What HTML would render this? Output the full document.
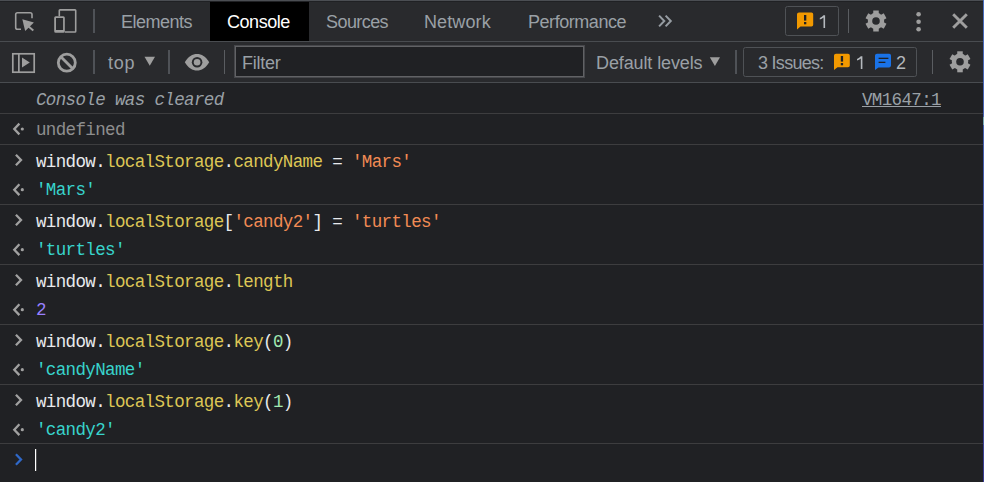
<!DOCTYPE html>
<html><head><meta charset="utf-8">
<style>
html,body{margin:0;padding:0;background:#202124;}
#root{position:relative;width:984px;height:482px;overflow:hidden;background:#202124;font-family:"Liberation Sans",sans-serif;}
.a{position:absolute;white-space:pre;}
.s{font-family:"Liberation Sans",sans-serif;font-size:18px;line-height:19px;color:#9aa0a6;}
.m{font-family:"Liberation Mono",monospace;font-size:17.5px;letter-spacing:-0.63px;line-height:19px;color:#e8eaed;}
.hl{position:absolute;left:0;width:983px;height:1px;background:#3d3d3f;}
.sep{position:absolute;width:1px;background:#5a5d61;}
.sep2{width:2px;background:#4f5257;}
svg{position:absolute;overflow:visible;}
.p{color:#ddc655}
.str{color:#f28b54}
.res{color:#38d4cc}
.num{color:#9980ff}
.gr{color:#a1e9b1}
</style></head><body>
<div id="root">
  <!-- top toolbar -->
  <div class="a" style="left:0;top:0;width:984px;height:1px;background:#4b4e53"></div>
  <div class="a" style="left:0;top:1px;width:984px;height:1px;background:#202124"></div>
  <div class="a" style="left:0;top:2px;width:984px;height:39px;background:#292a2d"></div>
  <div class="a" style="left:0;top:41px;width:984px;height:1px;background:#494c50"></div>
  <div class="a" style="left:0;top:42px;width:984px;height:40px;background:#292a2d"></div>
  <div class="a" style="left:0;top:82px;width:984px;height:1px;background:#494c50"></div>

  <!-- inspect icon -->
  <svg style="left:0;top:0" width="984" height="42">
    <path d="M21 29.2 H17.5 Q15.7 29.2 15.7 27.4 V14.5 Q15.7 12.7 17.5 12.7 H30.2 Q32 12.7 32 14.5 V18.2" fill="none" stroke="#9e9e9e" stroke-width="1.6"/>
    <path d="M22.3 19.3 L33.9 22.6 L25.2 31 Z" fill="#9e9e9e"/>
    <path d="M28 26 L33.3 30.6" stroke="#9e9e9e" stroke-width="2"/>
    <!-- device icon -->
    <path fill-rule="evenodd" fill="#9e9e9e" d="M58.5 16.3 V10.6 Q58.5 9.1 60 9.1 H75 Q76.5 9.1 76.5 10.6 V31.3 Q76.5 32.8 75 32.8 H64.8 V31.2 H74.9 V10.7 H60.1 V16.3 Z"/>
    <path fill-rule="evenodd" fill="#9e9e9e" d="M54.2 17.8 Q54.2 16.3 55.7 16.3 H63.3 Q64.8 16.3 64.8 17.8 V31.3 Q64.8 32.8 63.3 32.8 H55.7 Q54.2 32.8 54.2 31.3 Z M56 18.1 H63.1 V30 H56 Z"/>
  </svg>
  <div class="sep sep2" style="left:93px;top:9px;height:24px"></div>

  <div class="a" style="left:210px;top:2px;width:99px;height:39px;background:#000"></div>
  <div class="a s" style="left:121px;top:13px;letter-spacing:-0.5px">Elements</div>
  <div class="a s" style="left:227px;top:13px;letter-spacing:-0.45px;color:#ffffff">Console</div>
  <div class="a s" style="left:326px;top:13px;letter-spacing:-0.57px">Sources</div>
  <div class="a s" style="left:424px;top:13px;letter-spacing:0.12px">Network</div>
  <div class="a s" style="left:528px;top:13px;letter-spacing:-0.45px">Performance</div>
  <svg style="left:0;top:0" width="984" height="42">
    <path d="M659.1 15.6 L664.3 21 L659.1 26.4 M665.6 15.6 L670.8 21 L665.6 26.4" fill="none" stroke="#969ca2" stroke-width="2"/>
  </svg>

  <!-- issues badge top -->
  <div class="a" style="left:785px;top:6px;width:52px;height:28px;border:1px solid #4f5256;border-radius:2.5px"></div>
  <svg style="left:0;top:0" width="984" height="42">
    <path d="M799 12.6 H811.5 Q813.2 12.6 813.2 14.3 V24.7 Q813.2 26.4 811.5 26.4 H800.5 L797 29.4 V14.3 Q797 12.6 799 12.6 Z" fill="#f29900"/>
    <rect x="804" y="15" width="2.3" height="5.6" fill="#202124"/>
    <rect x="804" y="22" width="2.3" height="2.3" fill="#202124"/>
  </svg>
  <svg style="left:0;top:0" width="984" height="42"><path d="M823.5 15.2 H825.1 V28 H823.5 V17.6 Q822 18.9 819.8 19.6 V17.9 Q822.2 17 823.5 15.2 Z" fill="#b5b9be"/></svg>
  <div class="sep" style="left:848px;top:9px;height:24px"></div>

  <!-- gear, kebab, close -->
  <svg style="left:0;top:0" width="984" height="42">
    <g transform="translate(876,21)" fill="#9e9e9e">
      <circle r="8.2"/>
      <rect x="-2.75" y="-10.5" width="5.5" height="21"/>
      <rect x="-2.75" y="-10.5" width="5.5" height="21" transform="rotate(60)"/>
      <rect x="-2.75" y="-10.5" width="5.5" height="21" transform="rotate(120)"/>
      <circle r="3.8" fill="#292a2d"/>
    </g>
    <circle cx="918.6" cy="14.2" r="2.3" fill="#9e9e9e"/>
    <circle cx="918.6" cy="21.7" r="2.3" fill="#9e9e9e"/>
    <circle cx="918.6" cy="29.2" r="2.3" fill="#9e9e9e"/>
    <path d="M953.2 14.2 L966.8 27.8 M966.8 14.2 L953.2 27.8" stroke="#9e9e9e" stroke-width="2.9"/>
  </svg>

  <!-- second toolbar -->
  <svg style="left:0;top:0" width="984" height="84">
    <rect x="12.8" y="53.8" width="21.4" height="18.4" fill="none" stroke="#9e9e9e" stroke-width="1.7"/>
    <rect x="18" y="53.8" width="1.7" height="18.4" fill="#9e9e9e"/>
    <path d="M22 57.6 L29.8 62.5 L22 67.4 Z" fill="#9e9e9e"/>
    <circle cx="66.8" cy="62.7" r="8.5" fill="none" stroke="#9e9e9e" stroke-width="2.8"/>
    <path d="M60.8 56.7 L72.8 68.7" stroke="#9e9e9e" stroke-width="2.8"/>
    <path d="M144.5 56.7 H155 L149.75 65.8 Z" fill="#9e9e9e"/>
    <path d="M184.8 62.3 C188.3 56.6 192.5 54.1 197 54.1 C201.5 54.1 205.7 56.6 209.2 62.3 C205.7 68 201.5 70.6 197 70.6 C192.5 70.6 188.3 68 184.8 62.3 Z" fill="#9e9e9e"/>
    <circle cx="197.1" cy="62.3" r="5.3" fill="#292a2d"/>
    <circle cx="197.1" cy="62.3" r="3.3" fill="#9e9e9e"/>
    <path d="M709.8 57.3 H720 L714.9 66 Z" fill="#9e9e9e"/>
  </svg>
  <div class="sep sep2" style="left:93px;top:50px;height:24px"></div>
  <div class="a s" style="left:108px;top:54px;letter-spacing:0.8px">top</div>
  <div class="sep sep2" style="left:168px;top:50px;height:24px"></div>
  <div class="sep" style="left:224px;top:50px;height:24px"></div>

  <div class="a" style="left:234px;top:45px;width:349px;height:31px;border:1px solid #46474b;background:#202124;box-shadow:inset 0 0 0 1px #616265"></div>
  <div class="a s" style="left:242px;top:54px;letter-spacing:-0.25px">Filter</div>
  <div class="a s" style="left:596px;top:54px;letter-spacing:-0.11px">Default levels</div>
  <div class="sep sep2" style="left:735px;top:50px;height:24px"></div>

  <div class="a" style="left:743px;top:47px;width:172px;height:28px;border:1px solid #4f5256;border-radius:2.5px"></div>
  <div class="a s" style="left:758px;top:54px;letter-spacing:-0.72px">3 Issues:</div>
  <svg style="left:0;top:0" width="984" height="84">
    <path d="M836 53.7 H848 Q849.8 53.7 849.8 55.5 V65.4 Q849.8 67.2 848 67.2 H837.5 L834 70 V55.5 Q834 53.7 836 53.7 Z" fill="#f29900"/>
    <rect x="840.8" y="56" width="2.3" height="5.6" fill="#202124"/>
    <rect x="840.8" y="63" width="2.3" height="2.3" fill="#202124"/>
    <path d="M877 53.7 H889.2 Q891 53.7 891 55.5 V65.6 Q891 67.4 889.2 67.4 H878.5 L875 70 V55.5 Q875 53.7 877 53.7 Z" fill="#1a73e8"/>
    <rect x="878.6" y="57.7" width="9.8" height="1.3" fill="#202124"/>
    <rect x="878.6" y="61.7" width="6.8" height="1.3" fill="#202124"/>
  </svg>
  <svg style="left:0;top:0" width="984" height="84"><path d="M860.8 56.2 H862.4 V69 H860.8 V58.6 Q859.2 59.9 857 60.6 V58.9 Q859.4 58 860.8 56.2 Z" fill="#b5b9be"/></svg>
  <div class="a s" style="left:896px;top:54px;color:#b3b7bb">2</div>
  <div class="sep" style="left:932px;top:50px;height:24px"></div>
  <svg style="left:0;top:0" width="984" height="84">
    <g transform="translate(960,61.8)" fill="#9e9e9e">
      <circle r="8.2"/>
      <rect x="-2.75" y="-10.5" width="5.5" height="21"/>
      <rect x="-2.75" y="-10.5" width="5.5" height="21" transform="rotate(60)"/>
      <rect x="-2.75" y="-10.5" width="5.5" height="21" transform="rotate(120)"/>
      <circle r="3.8" fill="#292a2d"/>
    </g>
  </svg>

  <!-- console messages -->
  <div class="hl" style="top:113px"></div>
  <div class="hl" style="top:144px"></div>
  <div class="hl" style="top:204px"></div>
  <div class="hl" style="top:264px"></div>
  <div class="hl" style="top:324px"></div>
  <div class="hl" style="top:384px"></div>
  <div class="hl" style="top:443px"></div>

  <div class="a m" style="left:36px;top:91px;font-style:italic;color:#9aa0a6">Console was cleared</div>
  <div class="a m" style="left:862px;top:91px;color:#9aa0a6;text-decoration:underline">VM1647:1</div>

  <div class="a m" style="left:36px;top:121px;color:#8e8e8e">undefined</div>

  <div class="a m" style="left:36px;top:153px">window.<span class="p">localStorage</span>.<span class="p">candyName</span> = <span class="str">'Mars'</span></div>
  <div class="a m" style="left:36px;top:181px"><span class="res">'Mars'</span></div>

  <div class="a m" style="left:36px;top:213px">window.<span class="p">localStorage</span>[<span class="str">'candy2'</span>] = <span class="str">'turtles'</span></div>
  <div class="a m" style="left:36px;top:241px"><span class="res">'turtles'</span></div>

  <div class="a m" style="left:36px;top:273px">window.<span class="p">localStorage</span>.<span class="p">length</span></div>
  <div class="a m" style="left:36px;top:301px"><span class="num">2</span></div>

  <div class="a m" style="left:36px;top:333px">window.<span class="p">localStorage</span>.<span class="p">key</span>(<span class="gr">0</span>)</div>
  <div class="a m" style="left:36px;top:361px"><span class="res">'candyName'</span></div>

  <div class="a m" style="left:36px;top:393px">window.<span class="p">localStorage</span>.<span class="p">key</span>(<span class="gr">1</span>)</div>
  <div class="a m" style="left:36px;top:421px"><span class="res">'candy2'</span></div>

  <svg style="left:0;top:0" width="984" height="482">
    <g fill="none" stroke="#a0a0a0" stroke-width="2.3">
      <path d="M15.9 154.8 L21 160.0 L15.9 165.2"/>
      <path d="M15.9 214.8 L21 220.0 L15.9 225.2"/>
      <path d="M15.9 274.8 L21 280.0 L15.9 285.2"/>
      <path d="M15.9 334.8 L21 340.0 L15.9 345.2"/>
      <path d="M15.9 394.8 L21 400.0 L15.9 405.2"/>
      <path d="M19.4 123.6 L14.3 129.0 L19.4 134.4"/>
      <path d="M19.4 184.3 L14.3 189.7 L19.4 195.1"/>
      <path d="M19.4 244.3 L14.3 249.7 L19.4 255.1"/>
      <path d="M19.4 304.3 L14.3 309.7 L19.4 315.1"/>
      <path d="M19.4 364.3 L14.3 369.7 L19.4 375.1"/>
      <path d="M19.4 424.3 L14.3 429.7 L19.4 435.1"/>
    </g>
    <g fill="#a0a0a0">
      <circle cx="22.3" cy="129.0" r="1.6"/>
      <circle cx="22.3" cy="189.7" r="1.6"/>
      <circle cx="22.3" cy="249.7" r="1.6"/>
      <circle cx="22.3" cy="309.7" r="1.6"/>
      <circle cx="22.3" cy="369.7" r="1.6"/>
      <circle cx="22.3" cy="429.7" r="1.6"/>
    </g>
    <path d="M15.9 454.3 L21 459.5 L15.9 464.7" fill="none" stroke="#2f68c8" stroke-width="2.3"/>
    <rect x="35" y="449" width="1.2" height="22" fill="#ffffff"/>
  </svg>

  <div class="a" style="left:983px;top:0;width:1px;height:482px;background:linear-gradient(#4a6ebe,#393b92)"></div>
  <div class="a" style="left:983px;top:117px;width:1px;height:8px;background:#78aab4"></div>
</div>
</body></html>
